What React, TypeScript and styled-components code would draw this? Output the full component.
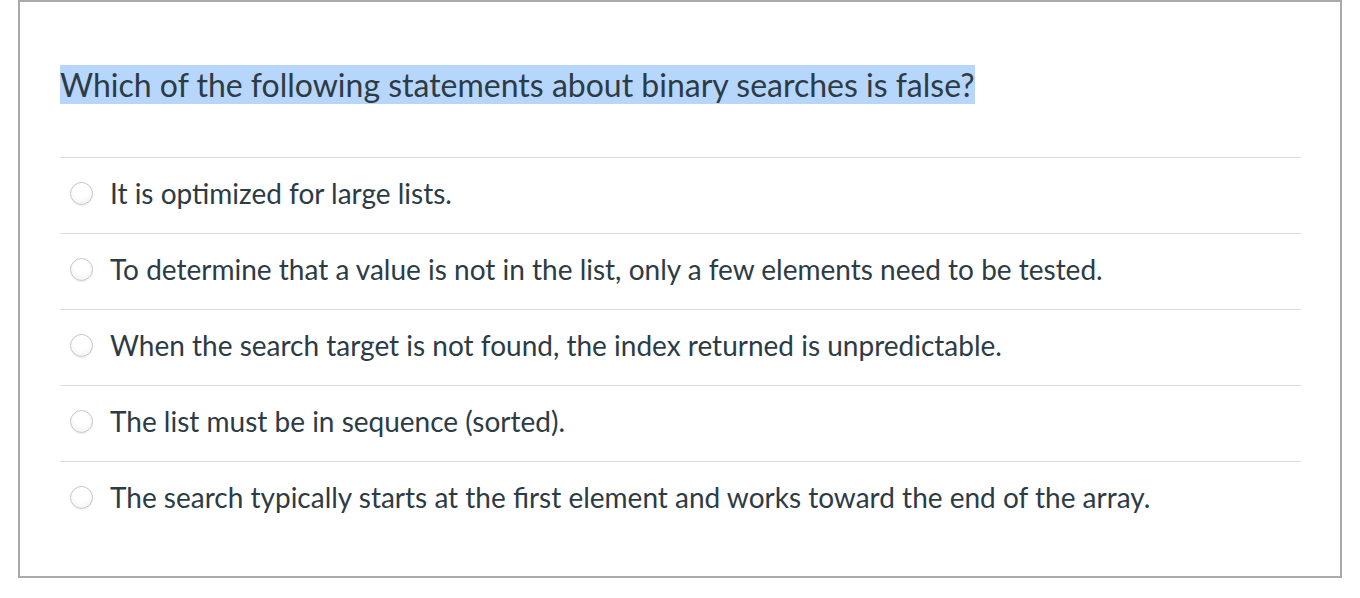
import React from "react";
import styled, { createGlobalStyle } from "styled-components";

const Global = createGlobalStyle`
  html, body { margin: 0; padding: 0; background: #fff; }
  body { font-family: Lato, "Noto Sans", sans-serif; color: #2d3b45; }
`;

const Page = styled.div`
  padding: 0 18px 0 18px;
  width: 1360px;
  box-sizing: border-box;
`;

const Card = styled.div`
  border: 2px solid #aaaaaa;
  height: 578px;
  box-sizing: border-box;
  padding: 63px 39px 0 40px;
`;

const Question = styled.div`
  font-size: 32px;
  line-height: 40px;
  margin-bottom: 52px;
`;

const Mark = styled.span`
  background: #b7d6fb;
`;

const List = styled.div`
  display: flex;
  flex-direction: column;
`;

const Row = styled.label`
  display: flex;
  align-items: center;
  border-top: 1px solid #dcdcdc;
  gap: 17px;
  padding-left: 10px;
  padding-bottom: 5px;
  box-sizing: border-box;
  height: 76px;
  font-size: 28px;
`;

const Radio = styled.span`
  width: 21px;
  height: 21px;
  border-radius: 50%;
  border: 1px solid #c6c6c6;
  background: radial-gradient(circle at 50% 35%, #ffffff 40%, #efefef 100%);
  box-shadow: 0 1px 1px rgba(0, 0, 0, 0.06);
  flex: none;
`;

const options = [
  "It is optimized for large lists.",
  "To determine that a value is not in the list, only a few elements need to be tested.",
  "When the search target is not found, the index returned is unpredictable.",
  "The list must be in sequence (sorted).",
  "The search typically starts at the first element and works toward the end of the array.",
];

export default function App() {
  return (
    <>
      <Global />
      <Page>
        <Card>
          <Question>
            <Mark>Which of the following statements about binary searches is false?</Mark>
          </Question>
          <List>
            {options.map((o) => (
              <Row key={o}>
                <Radio />
                <span>{o}</span>
              </Row>
            ))}
          </List>
        </Card>
      </Page>
    </>
  );
}
